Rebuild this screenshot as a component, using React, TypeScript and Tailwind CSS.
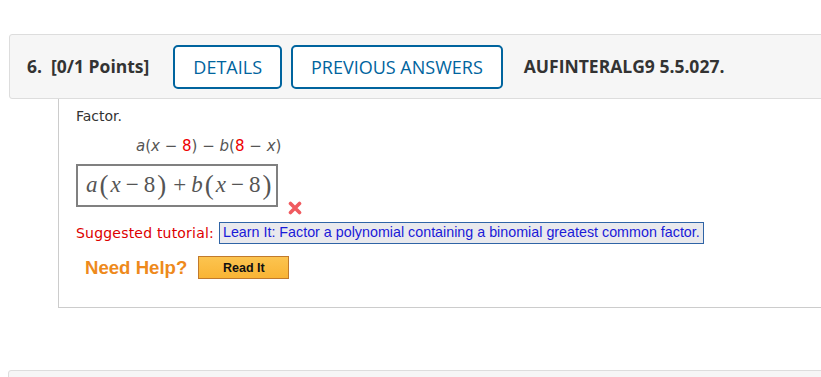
import React from "react";

export default function App() {
  return (
    <div className="w-[821px] h-[377px] overflow-hidden bg-white pt-[34px]" style={{ fontFamily: '"Open Sans", sans-serif' }}>
      {/* header */}
      <div className="ml-[9px] w-[830px] h-[65px] bg-[#f6f6f6] border border-[#dddddd] rounded-[3px] flex items-center">
        <span className="ml-[17px] text-[17.5px] font-bold text-[#333333]">6.</span>
        <span className="ml-[9px] text-[17.5px] font-bold text-[#333333]">[0/1 Points]</span>
        <button className="ml-[24px] h-[44px] px-[18px] border-2 border-[#00649e] rounded-[5px] text-[18px] text-[#00649e] bg-white leading-none">DETAILS</button>
        <button className="ml-[9px] h-[44px] px-[18px] border-2 border-[#00649e] rounded-[5px] text-[18px] text-[#00649e] bg-white leading-none">PREVIOUS ANSWERS</button>
        <span className="ml-[21px] text-[17.5px] font-bold text-[#333333]">AUFINTERALG9 5.5.027.</span>
      </div>

      {/* content */}
      <div className="ml-[58px] w-[780px] h-[209px] border-l border-b border-[#cccccc] pl-[17px] pt-[8px]" style={{ fontFamily: '"DejaVu Sans", Verdana, sans-serif' }}>
        <div className="text-[14px] text-[#333333] leading-[18px]">Factor.</div>
        <div className="mt-[12px] ml-[60px] text-[15px] text-[#555555] leading-[18px]">
          <span className="italic">a</span>(<span className="italic">x</span> − <span className="text-[#ee0000]">8</span>) − <span className="italic">b</span>(<span className="text-[#ee0000]">8</span> − <span className="italic">x</span>)
        </div>
        <div className="flex items-start mt-[9px]">
          <div
            className="w-[202px] h-[43px] border-2 border-[#808080] flex items-center pl-[8px] text-[23px] text-[#555555]"
            style={{ fontFamily: '"Liberation Serif", "Times New Roman", serif' }}
          >
            <span className="italic">a</span>
            <span className="text-[27px] mx-[2px]">(</span>
            <span className="italic">x</span>
            <span className="mx-[5px]">−</span>
            <span>8</span>
            <span className="text-[27px] mx-[2px]">)</span>
            <span className="mx-[5px]">+</span>
            <span className="italic">b</span>
            <span className="text-[27px] mx-[2px]">(</span>
            <span className="italic">x</span>
            <span className="mx-[5px]">−</span>
            <span>8</span>
            <span className="text-[27px] mx-[2px]">)</span>
          </div>
          <svg className="ml-[10px] mt-[37px]" width="14" height="14" viewBox="0 0 14 14">
            <path d="M2.5 2.5 L11.5 11.5 M11.5 2.5 L2.5 11.5" stroke="#f05a5f" strokeWidth="3.6" strokeLinecap="round" />
          </svg>
        </div>
        <div className="flex items-center mt-[7px]">
          <span className="text-[14px] text-[#dd0000] tracking-[0.2px]">Suggested tutorial:</span>
          <span
            className="ml-[5px] h-[22px] px-[3px] flex items-center bg-[#e9e9ed] border border-[#2f64a6] text-[14.3px] text-[#1a1ad8]"
            style={{ fontFamily: '"Liberation Sans", Arial, sans-serif' }}
          >
            Learn It: Factor a polynomial containing a binomial greatest common factor.
          </span>
        </div>
        <div className="flex items-center mt-[10px] ml-[9px]" style={{ fontFamily: '"Liberation Sans", Arial, sans-serif' }}>
          <span className="text-[18.6px] font-bold text-[#ee8a1c]">Need Help?</span>
          <button className="ml-[11px] w-[91px] h-[23px] border border-[#c17a2c] bg-gradient-to-b from-[#fcc44f] to-[#f9b434] text-[12.5px] font-bold text-[#111111] leading-none">
            Read It
          </button>
        </div>
      </div>

      {/* next header */}
      <div className="mt-[62px] ml-[8px] w-[830px] h-[30px] bg-[#f6f6f6] border border-[#dddddd] rounded-[3px]" />
    </div>
  );
}
